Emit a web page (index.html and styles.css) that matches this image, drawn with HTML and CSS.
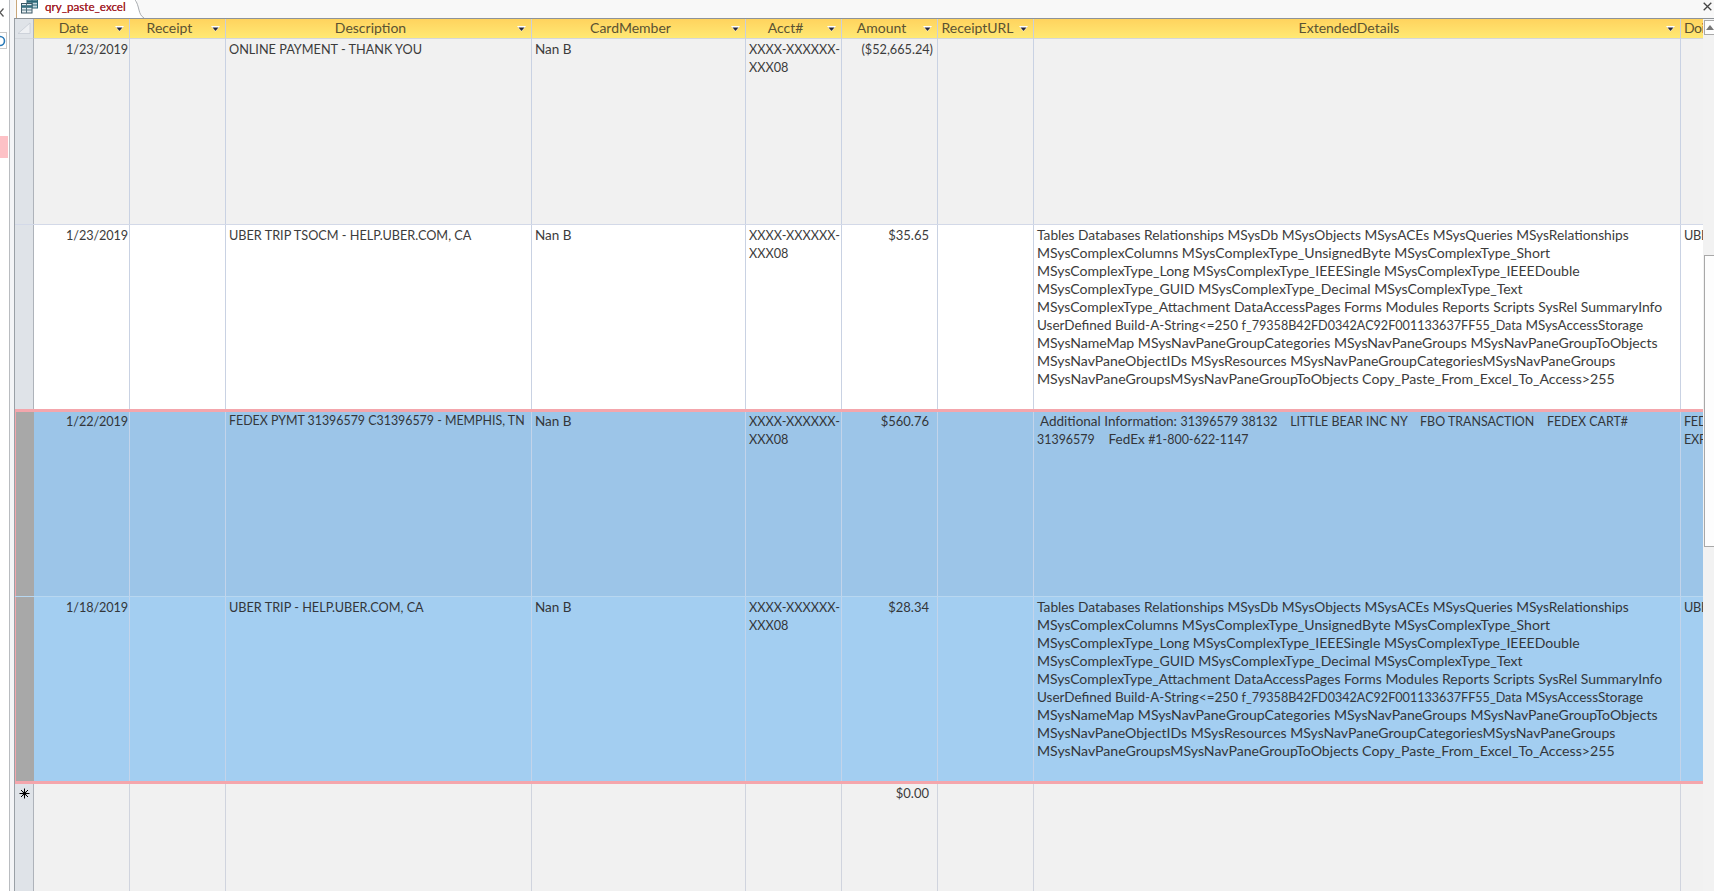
FILE: index.html
```html
<!DOCTYPE html>
<html lang="en">
<head>
<meta charset="utf-8">
<title>qry_paste_excel</title>
<link rel="stylesheet" href="styles.css">
</head>
<body>
<div class="app">
  <aside class="nav">
    <svg class="nav-chevron" width="4" height="9" viewBox="0 0 4 9"><path d="M3.5 .5L0 4.5l3.5 4" fill="none" stroke="#555" stroke-width="1.2"/></svg>
    <div class="nav-search"><svg width="6" height="12" viewBox="0 0 6 12"><path d="M0 1.5a4.5 4.5 0 0 1 0 9" fill="none" stroke="#2a7ab8" stroke-width="1.6"/></svg></div>
    <div class="nav-pink"></div>
  </aside>
  <div class="gutter"></div>
  <main class="main">
    <div class="tabbar">
      <div class="tab">
        <svg class="tab-icon" width="17" height="14" viewBox="0 0 17 14"><rect x="6" y="-3" width="10.5" height="11" fill="#c4d9e0" stroke="#2a6676"/><path d="M6 1.500h10.500" stroke="#2a6676" stroke-width="2.400"/><path d="M11 -3v11M6 5h10.500" stroke="#2a6676"/><rect x=".5" y="3.500" width="10.500" height="9.500" fill="#e6eef2" stroke="#3c5866"/><path d="M.5 6.500h10.500" stroke="#357080" stroke-width="2.600"/><path d="M.5 10h10.500M5.500 4v9" stroke="#4f707e"/></svg>
        <span class="tab-label">qry_paste_excel</span>
        <svg class="tab-edge" width="9" height="18" viewBox="0 0 9 18"><path d="M0 0C2 2 3 6 4 10C5 14 6 16 9 18H0Z" fill="#fff"/><path d="M0 0C2 2 3 6 4 10C5 14 6 16 9 18" fill="none" stroke="#a9adb1"/></svg>
      </div>
      <svg class="close-x" width="9" height="9" viewBox="0 0 9 9"><path d="M.7 .7l7.600 7.600M8.300 .7L.7 8.300" stroke="#444" stroke-width="1.300"/></svg>
    </div>
    <div class="workspace">
      <div class="sheet">
        <div class="row head">
          <div class="sel corner"><svg width="14" height="12" viewBox="0 0 14 12"><path d="M1 11.500L13 1v10.500Z" fill="#eef0f3" stroke="#c6ccd4" stroke-width=".8"/></svg></div>
          <div class="hd">Date<svg class="arrow"><use href="#drop"/></svg></div>
          <div class="hd">Receipt<svg class="arrow"><use href="#drop"/></svg></div>
          <div class="hd">Description<svg class="arrow"><use href="#drop"/></svg></div>
          <div class="hd">CardMember<svg class="arrow"><use href="#drop"/></svg></div>
          <div class="hd">Acct#<svg class="arrow"><use href="#drop"/></svg></div>
          <div class="hd">Amount<svg class="arrow"><use href="#drop"/></svg></div>
          <div class="hd">ReceiptURL<svg class="arrow"><use href="#drop"/></svg></div>
          <div class="hd">ExtendedDetails<svg class="arrow"><use href="#drop"/></svg></div>
          <div class="hd hd-last">Doing</div>
        </div>

        <div class="row data r1">
          <div class="sel"></div>
          <div class="c num">1/23/2019</div>
          <div class="c"></div>
          <div class="c caps">ONLINE PAYMENT - THANK YOU</div>
          <div class="c">Nan B</div>
          <div class="c caps">XXXX-XXXXXX-<br>XXX08</div>
          <div class="c num paren">($52,665.24)</div>
          <div class="c"></div>
          <div class="c"></div>
          <div class="c"></div>
        </div>

        <div class="row data r2">
          <div class="sel"></div>
          <div class="c num">1/23/2019</div>
          <div class="c"></div>
          <div class="c caps">UBER TRIP TSOCM - HELP.UBER.COM, CA</div>
          <div class="c">Nan B</div>
          <div class="c caps">XXXX-XXXXXX-<br>XXX08</div>
          <div class="c num pos">$35.65</div>
          <div class="c"></div>
          <div class="c details"><span class="l1">Tables Databases Relationships MSysDb MSysObjects MSysACEs MSysQueries MSysRelationships</span><br>MSysComplexColumns MSysComplexType_UnsignedByte MSysComplexType_Short<br>MSysComplexType_Long MSysComplexType_IEEESingle MSysComplexType_IEEEDouble<br>MSysComplexType_GUID MSysComplexType_Decimal MSysComplexType_Text<br><span class="l5">MSysComplexType_Attachment DataAccessPages Forms Modules Reports Scripts SysRel SummaryInfo</span><br><span class="l6">UserDefined Build-A-String&lt;=250 <span class="hex">f_79358B42FD0342AC92F001133637FF55_Data</span> MSysAccessStorage</span><br>MSysNameMap MSysNavPaneGroupCategories MSysNavPaneGroups MSysNavPaneGroupToObjects<br>MSysNavPaneObjectIDs MSysResources MSysNavPaneGroupCategoriesMSysNavPaneGroups<br><span class="l9">MSysNavPaneGroupsMSysNavPaneGroupToObjects Copy_Paste_From_Excel_To_Access&gt;255</span></div>
          <div class="c clip">UBER</div>
        </div>

        <div class="row data picked r3">
          <div class="sel"></div>
          <div class="c num">1/22/2019</div>
          <div class="c"></div>
          <div class="c caps tight">FEDEX PYMT 31396579 C31396579 - MEMPHIS, TN</div>
          <div class="c">Nan B</div>
          <div class="c caps">XXXX-XXXXXX-<br>XXX08</div>
          <div class="c num pos">$560.76</div>
          <div class="c"></div>
          <div class="c"> Additional Information: <span class="info">31396579 38132    LITTLE BEAR INC NY    FBO TRANSACTION    FEDEX CART#<br>31396579</span>    FedEx <span class="info">#1-800-622-1147</span></div>
          <div class="c clip">FEDEX<br>EXPRESS</div>
        </div>

        <div class="row data picked r4">
          <div class="sel"></div>
          <div class="c num">1/18/2019</div>
          <div class="c"></div>
          <div class="c caps">UBER TRIP - HELP.UBER.COM, CA</div>
          <div class="c">Nan B</div>
          <div class="c caps">XXXX-XXXXXX-<br>XXX08</div>
          <div class="c num pos">$28.34</div>
          <div class="c"></div>
          <div class="c details"><span class="l1">Tables Databases Relationships MSysDb MSysObjects MSysACEs MSysQueries MSysRelationships</span><br>MSysComplexColumns MSysComplexType_UnsignedByte MSysComplexType_Short<br>MSysComplexType_Long MSysComplexType_IEEESingle MSysComplexType_IEEEDouble<br>MSysComplexType_GUID MSysComplexType_Decimal MSysComplexType_Text<br><span class="l5">MSysComplexType_Attachment DataAccessPages Forms Modules Reports Scripts SysRel SummaryInfo</span><br><span class="l6">UserDefined Build-A-String&lt;=250 <span class="hex">f_79358B42FD0342AC92F001133637FF55_Data</span> MSysAccessStorage</span><br>MSysNameMap MSysNavPaneGroupCategories MSysNavPaneGroups MSysNavPaneGroupToObjects<br>MSysNavPaneObjectIDs MSysResources MSysNavPaneGroupCategoriesMSysNavPaneGroups<br><span class="l9">MSysNavPaneGroupsMSysNavPaneGroupToObjects Copy_Paste_From_Excel_To_Access&gt;255</span></div>
          <div class="c clip">UBER</div>
        </div>

        <div class="row data r5">
          <div class="sel star"><svg width="11" height="11" viewBox="0 0 11 11"><path d="M5.500 .5v10M.5 5.500h10M2 2l7 7M9 2l-7 7" stroke="#000" stroke-width="1"/><circle cx="5.500" cy="5.500" r="2" fill="#000"/></svg></div>
          <div class="c"></div>
          <div class="c"></div>
          <div class="c"></div>
          <div class="c"></div>
          <div class="c"></div>
          <div class="c num pos">$0.00</div>
          <div class="c"></div>
          <div class="c"></div>
          <div class="c"></div>
        </div>
      </div>
      <div class="scrollbar">
        <div class="sb-up"><svg width="8" height="5" viewBox="0 0 8 5"><path d="M4 0l4 5H0Z" fill="#777"/></svg></div>
        <div class="sb-thumb"></div>
      </div>
    </div>
  </main>
</div>
<svg class="defs" width="0" height="0"><defs><symbol id="drop" viewBox="0 0 9 6"><path d="M0 0h9L4.500 5.500Z" fill="#fff"/><path d="M1.500 1.500h6L4.500 5Z" fill="#26263a"/></symbol></defs></svg>
</body>
</html>
```

FILE: styles.css
```css
* { box-sizing: border-box; }
html, body { margin: 0; height: 100%; }
body {
  overflow: hidden;
  background: #fff;
  font-family: "Lato", "Open Sans", sans-serif;
  font-size: 13.5px;
  line-height: 18px;
  color: #3c3c3c;
}
.app { display: flex; height: 891px; }

.nav {
  width: 10px;
  flex: none;
  border-right: 1px solid #b9bcc0;
  background: #fff;
  display: flex;
  flex-direction: column;
  align-items: flex-start;
  overflow: hidden;
}
.nav-chevron { display: block; margin-top: 8px; }
.nav-search {
  width: 7px;
  height: 17px;
  margin-top: 15px;
  border: 1px solid #c8c8c8;
  border-left: 0;
  background: #fff;
  display: flex;
  align-items: center;
}
.nav-pink { width: 8px; height: 22px; margin-top: 87px; background: #fdc1c6; }

.gutter {
  width: 4px;
  flex: none;
  background: #f4f5f7;
}

.main { flex: 1; min-width: 0; display: flex; flex-direction: column; }

.tabbar {
  height: 19px;
  flex: none;
  background: #f8f8f8;
  border-bottom: 1px solid #8e9398;
  display: flex;
  justify-content: space-between;
  align-items: flex-start;
}
.tab {
  position: relative;
  width: 121px;
  height: 18px;
  margin-left: 2px;
  background: #fff;
  border-left: 1px solid #c9a77a;
  display: flex;
  align-items: flex-start;
}
.tab-icon { display: block; margin-left: 4px; flex: none; }
.tab-label {
  margin-left: 7px;
  font-size: 11.6px;
  line-height: 14px;
  color: #a3262c;
  white-space: nowrap;
  text-shadow: 0 0 .4px #a3262c;
}
.tab-edge { position: absolute; left: 118px; top: 0; }
.close-x { display: block; margin: 2px 2px 0 0; }

.workspace { flex: 1; min-height: 0; display: flex; }

.sheet {
  width: 1689px;
  flex: none;
  border-left: 1px solid #9aa0a6;
  overflow: hidden;
}
.row {
  display: grid;
  grid-template-columns: 19px 96px 96px 306px 214px 96px 96px 96px 647px 22px;
}
.sel { background: #dfe3e8; border-right: 1px solid #aeb3ba; }

.head { height: 20px; }
.corner { display: flex; align-items: flex-end; justify-content: center; padding-bottom: 4px; border-bottom: 1px solid #d3d7dd; }
.hd {
  position: relative;
  height: 20px;
  padding: 0 16px 0 0;
  background: linear-gradient(#ffd35e, #ffe974);
  border-right: 1px solid #c9cfdc;
  border-bottom: 1px solid #d3d7dd;
  color: #5b5232;
  font-size: 14px;
  line-height: 18px;
  text-align: center;
  white-space: nowrap;
}
.hd-last { padding: 0 0 0 3px; text-align: left; overflow: hidden; border-right: 0; letter-spacing: -.5px; }
.arrow { position: absolute; right: 5px; top: 7px; width: 9px; height: 6px; }

.data .c {
  padding: 1px 3px 0;
  border-right: 1px solid #c9d2e3;
  white-space: pre;
}
.c.num { padding-right: 1px; text-align: right; font-size: 12.7px; letter-spacing: -.12px; }
.c.paren { padding-right: 4px; letter-spacing: 0; }
.c.pos { padding-right: 8px; font-size: 13px; letter-spacing: 0; }
.c.caps { font-size: 12.7px; }
.c.tight { font-size: 12.4px; }
.c.details { font-size: 14.05px; }
.l1, .l5, .l6, .l9, .hex, .info { line-height: 1; }
.l1 { font-size: 13.75px; }
.l5 { font-size: 13.98px; }
.l6 { font-size: 13.5px; }
.l9 { font-size: 14.13px; }
.hex { font-size: 12.6px; }
.info { font-size: 12.45px; }
.c.clip { overflow: hidden; border-right: 0; font-size: 12.7px; letter-spacing: -.3px; }
.c:last-child { border-right: 0; }

.r1 { height: 186px; background: #f1f1f1; border-bottom: 1px solid #d3d9e8; }
.r2 { height: 184px; background: #fff; }
.picked { color: #33363a; }
.picked .sel { background: #a8a8a8; border-right-color: #a8a8a8; box-shadow: inset 1px 0 0 #f4a6ac; }
.picked .c { border-right-color: #c3d4ea; }
.r3 { height: 187px; background: #9cc5e8; border-top: 3px solid #f4a6ac; }
.data.r3 .c { padding-top: 0; }
.r4 { height: 188px; background: #a3cef1; border-top: 1px solid #b8d7f0; border-bottom: 3px solid #f4a6ac; }
.r5 { height: 120px; background: #f1f1f1; }
.r5 .sel { display: flex; justify-content: center; padding-top: 4px; }
.data.r5 .c { padding-top: 0; border-right-color: #d0d4de; }

.scrollbar {
  flex: 1;
  min-width: 0;
  background: #f2f2f2;
  padding: 1px 0 0 1px;
  display: flex;
  flex-direction: column;
}
.sb-up {
  height: 15px;
  background: #fdfdfd;
  border: 1px solid #a8a8a8;
  border-right: 0;
  display: flex;
  align-items: center;
  justify-content: center;
}
.sb-thumb {
  height: 292px;
  margin-top: 220px;
  background: #fdfdfd;
  border: 1px solid #a8a8a8;
  border-right: 0;
}
.defs { position: absolute; }
```
